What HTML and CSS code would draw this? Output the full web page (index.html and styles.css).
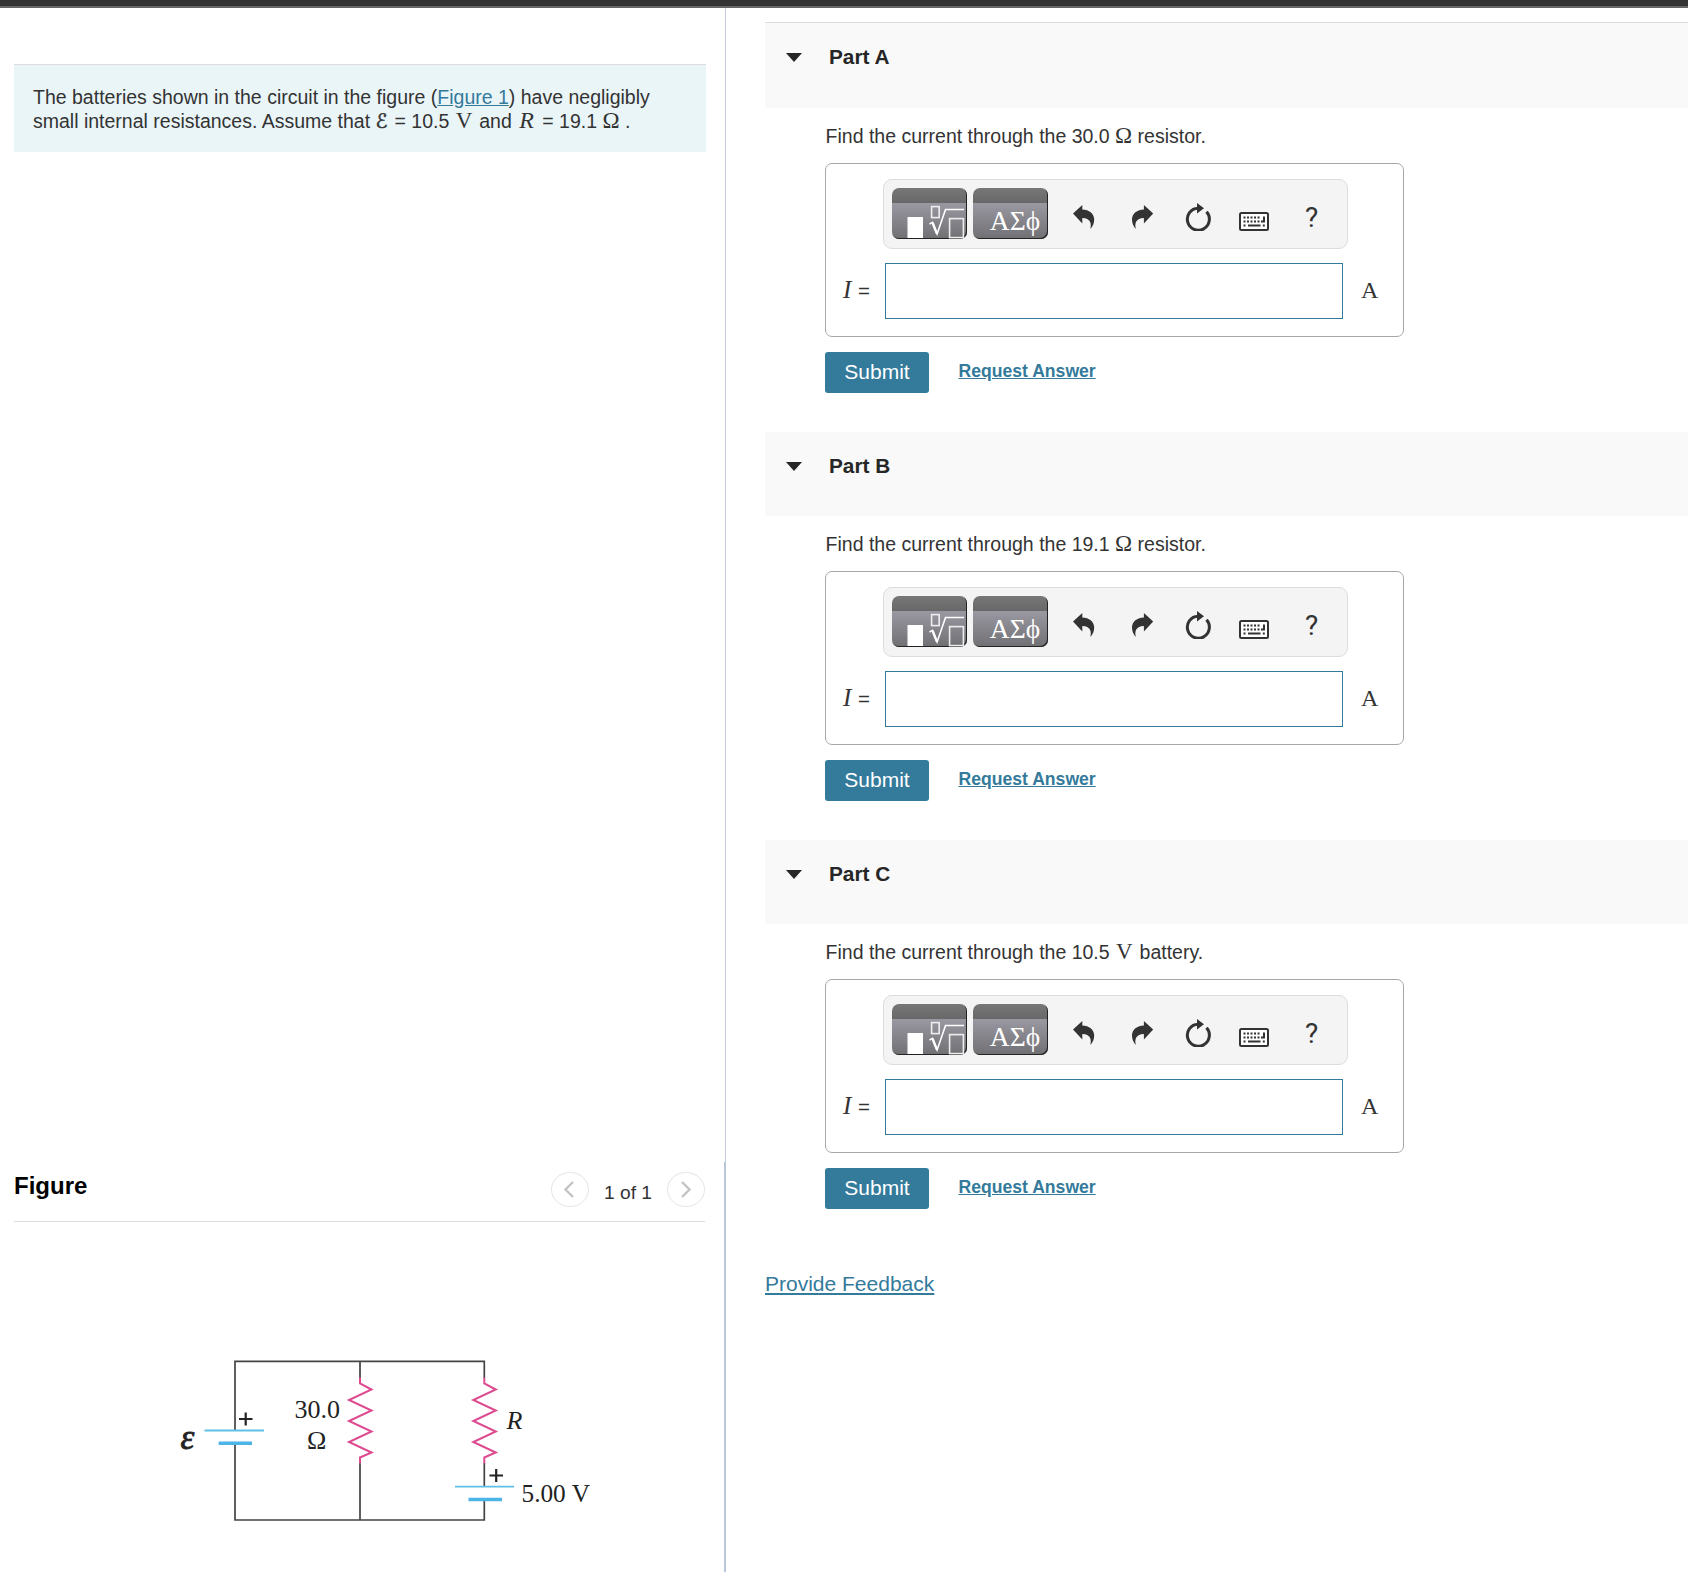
FILE: index.html
```html
<!DOCTYPE html>
<html lang="en">
<head>
    <meta charset="UTF-8">
    <meta name="viewport" content="width=device-width, initial-scale=1.0">
    <title>Circuit problem</title>
    <link rel="stylesheet" href="styles.css">
</head>
<body>

    <!-- shared toolbar icons -->
    <svg class="sprite" width="0" height="0">
        <symbol id="icon-templates" viewBox="0 0 75 51">
            <rect x="15.5" y="29" width="15.5" height="21" fill="#fff"/>
            <rect x="39.6" y="18.6" width="7.6" height="11" fill="none" stroke="#eee" stroke-width="1.6"/>
            <path d="M37.500 36l3-1.600 4.600 11.600L53.500 21.500H72" fill="none" stroke="#fff" stroke-width="1.600"/>
            <path d="M40.500 34.600l4.400 11" stroke="#fff" stroke-width="2.400"/>
            <rect x="57.600" y="30.600" width="13.800" height="19" fill="none" stroke="#eee" stroke-width="1.600"/>
        </symbol>
        <symbol id="icon-undo" viewBox="0 0 22 24">
            <path d="M0 8.600L9.300 0v4.400C16 4.600 21.200 8.400 21.200 14.600c0 4-1.500 6.800-3.900 9.400 1.500-5.600.2-10.600-8-11v5.400z"/>
        </symbol>
        <symbol id="icon-redo" viewBox="0 0 22 24">
            <path d="M21.200 8.600L11.900 0v4.400C5.200 4.600 0 8.400 0 14.600c0 4 1.500 6.800 3.900 9.400-1.500-5.600-.2-10.600 8-11v5.400z"/>
        </symbol>
        <symbol id="icon-reset" viewBox="0 0 26 28">
            <path d="M21.500 8.800A11 11 0 1 1 13 5.200" fill="none" stroke="#333" stroke-width="3"/>
            <path d="M12 0l7 5.200-7 5.400z"/>
        </symbol>
        <symbol id="icon-keyboard" viewBox="0 0 30 19">
            <rect x="1" y="1" width="28" height="17" rx="1.500" fill="#fff" stroke="#333" stroke-width="2"/>
            <path d="M4.500 5.500h17.500M4.500 9.500h17.500" stroke="#333" stroke-width="2" stroke-dasharray="2 1.500" fill="none"/>
            <path d="M25 4.500v5h-3M4.500 13.500h2M9 13.500h12.500M23.800 13.500h2" stroke="#333" stroke-width="2" fill="none"/>
        </symbol>
    </svg>

    <div class="topbar"></div>

    <div class="layout">
        <div class="left">
            <div class="problem-pane">
                <div class="problem">
                    The batteries shown in the circuit in the figure (<a href="#figure">Figure 1</a>) have negligibly<br>
                    small internal resistances. Assume that <span class="math script">ℰ</span> = 10.5 <span class="math volt">V</span> and <span class="math it">R</span> = 19.1 <span class="math">Ω</span> .
                </div>
            </div>
            <div class="figure-pane" id="figure">
                <div class="figure-head">
                    <h2>Figure</h2>
                    <div class="pager">
                        <span class="pager-btn"><svg width="10" height="17" viewBox="0 0 10 17"><path d="M9 1L1.500 8.500 9 16"/></svg></span>
                        <span class="pager-text">1 of 1</span>
                        <span class="pager-btn"><svg width="10" height="17" viewBox="0 0 10 17"><path d="M1 1l7.500 7.500L1 16"/></svg></span>
                    </div>
                </div>
                <svg class="circuit" width="450" height="200" viewBox="160 1340 450 200">
                    <g class="wire">
                        <path d="M235 1430V1361.300H484.300V1378"/>
                        <path d="M235 1445V1520H484.300V1501"/>
                        <path d="M360 1361V1378M360 1463V1520M484.300 1463V1486"/>
                    </g>
                    <g class="resistor">
                        <path id="zigzag" d="M360 1377.500v6l11.500 6-22.500 10.500 22.500 10.500-22.500 10.500 22.500 10.500-22.500 10.500 22.500 10.500-11.500 5v6"/>
                        <use href="#zigzag" x="124.300"/>
                    </g>
                    <g class="battery">
                        <path d="M204.500 1430.500H264M455 1486.700H514"/>
                        <path class="short" d="M218.700 1443.300H252M468.500 1499.500H502"/>
                    </g>
                    <path class="plus" d="M239 1419h13.500M245.700 1412.500v13M489.500 1475.500h13.500M496.200 1469v13"/>
                    <text x="180.500" y="1448.500" class="emf">ε</text>
                    <text x="294.500" y="1417.500" font-size="26">30.0</text>
                    <text x="307" y="1448.500" font-size="26">Ω</text>
                    <text x="506.500" y="1429" font-size="26" font-style="italic">R</text>
                    <text x="521.500" y="1502" font-size="25.300">5.00 V</text>
                </svg>
            </div>
        </div>

        <div class="right">
            <section class="part first">
                <div class="part-head"><span class="caret"></span><h3>Part A</h3></div>
                <div class="part-body">
                    <p class="prompt">Find the current through the 30.0 <span class="math">Ω</span> resistor.</p>
                    <div class="answer">
                        <div class="toolbar">
                            <button class="tool"><svg width="75" height="51"><use href="#icon-templates"/></svg></button>
                            <button class="tool greek">ΑΣϕ</button>
                            <svg class="undo" width="22" height="24"><use href="#icon-undo"/></svg>
                            <svg class="redo" width="22" height="24"><use href="#icon-redo"/></svg>
                            <svg class="reset" width="26" height="28"><use href="#icon-reset"/></svg>
                            <svg class="keyboard" width="30" height="19"><use href="#icon-keyboard"/></svg>
                            <span class="help">?</span>
                        </div>
                        <div class="entry">
                            <span class="label"><i>I</i> =</span>
                            <input type="text">
                            <span class="unit">A</span>
                        </div>
                    </div>
                    <div class="actions">
                        <button class="submit">Submit</button>
                        <a class="request" href="#">Request Answer</a>
                    </div>
                </div>
            </section>

            <section class="part">
                <div class="part-head"><span class="caret"></span><h3>Part B</h3></div>
                <div class="part-body">
                    <p class="prompt">Find the current through the 19.1 <span class="math">Ω</span> resistor.</p>
                    <div class="answer">
                        <div class="toolbar">
                            <button class="tool"><svg width="75" height="51"><use href="#icon-templates"/></svg></button>
                            <button class="tool greek">ΑΣϕ</button>
                            <svg class="undo" width="22" height="24"><use href="#icon-undo"/></svg>
                            <svg class="redo" width="22" height="24"><use href="#icon-redo"/></svg>
                            <svg class="reset" width="26" height="28"><use href="#icon-reset"/></svg>
                            <svg class="keyboard" width="30" height="19"><use href="#icon-keyboard"/></svg>
                            <span class="help">?</span>
                        </div>
                        <div class="entry">
                            <span class="label"><i>I</i> =</span>
                            <input type="text">
                            <span class="unit">A</span>
                        </div>
                    </div>
                    <div class="actions">
                        <button class="submit">Submit</button>
                        <a class="request" href="#">Request Answer</a>
                    </div>
                </div>
            </section>

            <section class="part">
                <div class="part-head"><span class="caret"></span><h3>Part C</h3></div>
                <div class="part-body">
                    <p class="prompt">Find the current through the 10.5 <span class="math volt">V</span> battery.</p>
                    <div class="answer">
                        <div class="toolbar">
                            <button class="tool"><svg width="75" height="51"><use href="#icon-templates"/></svg></button>
                            <button class="tool greek">ΑΣϕ</button>
                            <svg class="undo" width="22" height="24"><use href="#icon-undo"/></svg>
                            <svg class="redo" width="22" height="24"><use href="#icon-redo"/></svg>
                            <svg class="reset" width="26" height="28"><use href="#icon-reset"/></svg>
                            <svg class="keyboard" width="30" height="19"><use href="#icon-keyboard"/></svg>
                            <span class="help">?</span>
                        </div>
                        <div class="entry">
                            <span class="label"><i>I</i> =</span>
                            <input type="text">
                            <span class="unit">A</span>
                        </div>
                    </div>
                    <div class="actions">
                        <button class="submit">Submit</button>
                        <a class="request" href="#">Request Answer</a>
                    </div>
                </div>
            </section>

            <a class="feedback" href="#">Provide Feedback</a>
        </div>
    </div>

</body>
</html>
```
FILE: styles.css
```css
* { box-sizing: border-box; }

body {
    margin: 0;
    height: 1572px;
    background-color: #fff;
    color: #333;
    font-family: "Liberation Sans", Arial, sans-serif;
    font-size: 19.5px;
    line-height: 24px;
    overflow: hidden;
}

a { color: #337a9b; text-decoration: underline; }
h2, h3, p { margin: 0; }
button { border: 0; padding: 0; font-family: inherit; }
.sprite { display: block; }

.topbar {
    height: 8px;
    background-color: #333;
    border-bottom: 2px solid #666;
}

.layout { display: flex; height: 1564px; }

/* Left column */
.left { width: 726px; flex: none; }

.problem-pane {
    height: 1154px;
    padding: 56px 19px 0 14px;
    border-right: 1px solid #c3cad9;
}

.problem {
    height: 88px;
    padding: 20px 0 0 19px;
    background-color: #eaf5f8;
    border-top: 1px solid #ddd;
    white-space: nowrap;
}

.math {
    font-family: "Liberation Serif", serif;
    font-size: 23px;
    line-height: 0;
}
.math.it { margin: 0 3px 0 2px; font-size: 24px; font-style: italic; }
.math.volt { margin: 0 1.5px 0 1px; }
.math.script {
    margin-right: 1.5px;
    font-family: "DejaVu Sans", sans-serif;
    font-size: 20px;
    -webkit-text-stroke: 0.5px #333;
}

.figure-pane {
    height: 410px;
    padding: 0 19px 0 14px;
    border-right: 2px solid #b9c7da;
}

.figure-head {
    display: flex;
    justify-content: space-between;
    height: 60px;
    border-bottom: 1px solid #ddd;
}

.figure-head h2 {
    padding-top: 12px;
    color: #000;
    font-size: 24px;
    line-height: 24px;
}

.pager { display: flex; align-items: flex-start; padding-top: 10px; }

.pager-btn {
    display: flex;
    align-items: center;
    justify-content: center;
    width: 38px;
    height: 35px;
    padding-right: 2px;
    border: 1px solid #e6e6e6;
    border-radius: 50%;
}
.pager-btn:last-child { padding: 0; }
.pager-btn path { fill: none; stroke: #c4c4c4; stroke-width: 2.4; }

.pager-text { width: 78px; padding-top: 9px; text-align: center; font-size: 19.2px; }

.circuit { display: block; margin: 118px 0 0 146px; font-family: "Liberation Serif", serif; fill: #222; }
.wire { fill: none; stroke: #444; stroke-width: 1.7; }
.resistor { fill: none; stroke: #dd4a90; stroke-width: 2; }
.battery { stroke: #5fbfe6; stroke-width: 1.8; }
.battery .short { stroke: #4db4e8; stroke-width: 3.4; }
.plus { stroke: #222; stroke-width: 2.2; }
.emf { font-size: 35px; font-style: italic; stroke: #222; stroke-width: 0.8; }

/* Right column */
.right { flex: 1; padding: 14px 0 0 39px; }

.part { height: 408px; }

.part-head {
    display: flex;
    height: 84px;
    padding: 22px 0 0 21px;
    background-color: #f9f9f9;
}
.part.first { height: 410px; }
.part.first .part-head { height: 86px; border-top: 1px solid #ddd; }

.caret {
    width: 16px;
    height: 9px;
    margin: 8px 27px 0 0;
    background-color: #262626;
    clip-path: polygon(0 0, 100% 0, 50% 100%);
}

.part-head h3 { color: #262626; font-size: 20.8px; line-height: 24px; }

.part-body { padding: 16px 0 0 60px; }
.prompt { padding-left: 0.6px; }

.answer {
    width: 579px;
    height: 174px;
    margin-top: 15px;
    padding: 15px 0 0 14px;
    border: 1px solid #a8a8a8;
    border-radius: 7px;
}

.toolbar {
    display: flex;
    align-items: flex-start;
    width: 465px;
    height: 70px;
    margin-left: 43px;
    padding: 8px;
    background-color: #f4f4f4;
    border: 1px solid #ddd;
    border-radius: 9px;
    fill: #333;
}

.tool {
    width: 75px;
    height: 51px;
    margin-right: 6px;
    color: #fff;
    background: linear-gradient(#777 0, #686868 15px, #9a98a1 15px, #707074 100%);
    border-radius: 7px;
    box-shadow: inset -1px -1px 0 #222;
}
.tool svg { display: block; }
.greek {
    padding: 14px 0 0 9px;
    font-family: "Liberation Serif", "DejaVu Serif", serif;
    font-size: 27.5px;
}

.undo { margin: 17px 0 0 19px; }
.redo { margin: 17px 0 0 37px; }
.reset { margin: 15px 0 0 31px; }
.keyboard { margin: 24px 0 0 28px; }
.help { margin: 16px 0 0 36px; font: 28px/28px Roboto, sans-serif; }

.entry { display: flex; align-items: center; margin-top: 14px; }
.entry .label { width: 45px; padding-left: 3px; font-size: 20.5px; }
.entry .label i { margin-right: 1px; font-family: "Liberation Serif", serif; font-size: 25px; line-height: 0; }
.entry input {
    width: 458px;
    height: 56px;
    border: 1px solid #337a9b;
    background-color: #fff;
}
.entry .unit { margin-left: 18px; padding-bottom: 2px; font-family: "Liberation Serif", serif; font-size: 24px; }

.actions { display: flex; margin-top: 15px; }

.submit {
    width: 104px;
    height: 41px;
    padding-bottom: 2px;
    color: #fff;
    background-color: #337a9b;
    border-radius: 3px;
    font-size: 21px;
}

.request { margin: 7px 0 0 29.5px; font-size: 17.6px; font-weight: bold; }

.feedback { display: inline-block; margin-top: 24px; font-size: 21px; }
```
